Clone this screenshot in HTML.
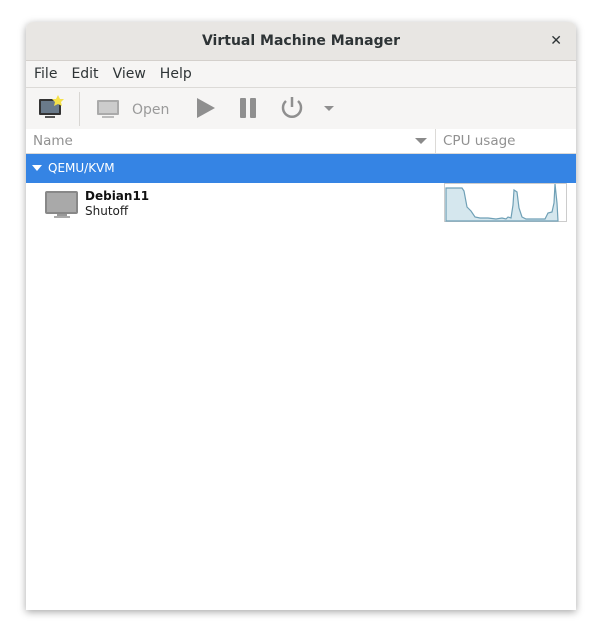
<!DOCTYPE html>
<html><head><style>
body{margin:0;width:602px;height:639px;background:#fff;font-family:"DejaVu Sans","Liberation Sans",sans-serif;position:relative;overflow:hidden}
.win{position:absolute;left:26px;top:22px;width:550px;height:588px;background:#fff;border-radius:7px 7px 0 0;box-shadow:0 2px 8px rgba(0,0,0,.35);overflow:hidden}
.title{height:38px;background:#e8e6e3;border-bottom:1px solid #d4d0cc;text-align:center;line-height:38px;font-size:14px;font-weight:bold;color:#2e3436;position:relative}
.x{position:absolute;right:14px;top:0;font-size:14px}
.menu{height:26px;background:#f6f5f4;font-size:14px;color:#2e3436;line-height:26px;border-bottom:1px solid #dcdad7}
.menu span{margin-left:8px;margin-right:6px}
.tb{height:41px;background:#f6f5f4;position:relative}
.hdr{height:24px;border-bottom:1px solid #dcdad7;position:relative;font-size:13.5px;color:#919191;line-height:24px}
.grp{height:29px;background:#3584e4;color:#fff;font-size:12px;line-height:29px;position:relative}
</style></head><body>
<div class="win">
<div class="title">Virtual Machine Manager<span class="x">✕</span></div>
<div class="menu"><span>File</span><span>Edit</span><span>View</span><span>Help</span></div>
<div class="tb">
 <svg width="550" height="41" style="position:absolute;left:0;top:0">
  <rect x="13" y="11" width="22" height="16" rx="1" fill="#333"/><rect x="15" y="13" width="18" height="12" fill="#6a7a8a"/>
  <rect x="19" y="28" width="10" height="2" fill="#555"/>
  <polygon points="32,7 34,11 38,11 35,14 36,18 32,16 28,18 29,14 26,11 30,11" fill="#f5e14a"/>
  <line x1="53.5" y1="4" x2="53.5" y2="38" stroke="#d8d6d3"/>
  <rect x="71" y="12" width="22" height="15" rx="1" fill="#aaa"/><rect x="73" y="14" width="18" height="11" fill="#ccc"/>
  <rect x="76" y="28" width="12" height="2" fill="#bbb"/>
  <text x="106" y="26" font-size="14" fill="#9a9a9a" font-family="DejaVu Sans, sans-serif">Open</text>
  <polygon points="171,10 189,20 171,30" fill="#8f8f8f"/>
  <rect x="214" y="10" width="6" height="20" rx="1" fill="#8f8f8f"/><rect x="224" y="10" width="6" height="20" rx="1" fill="#8f8f8f"/>
  <path d="M260 13 A9 9 0 1 0 272 13" fill="none" stroke="#8f8f8f" stroke-width="2.5"/>
  <line x1="266" y1="9" x2="266" y2="19" stroke="#8f8f8f" stroke-width="2.5"/>
  <polygon points="298,18 308,18 303,23" fill="#8f8f8f"/>
 </svg>
</div>
<div class="hdr"><span style="margin-left:7px">Name</span>
 <svg width="12" height="8" style="position:absolute;left:389px;top:9px"><polygon points="0,0 12,0 6,6" fill="#8a8a8a"/></svg>
 <div style="position:absolute;left:409px;top:0;height:24px;border-left:1px solid #dcdad7;padding-left:7px">CPU usage</div>
</div>
<div class="grp"><svg width="10" height="8" style="position:absolute;left:6px;top:11px"><polygon points="0,0 10,0 5,6" fill="#fff"/></svg><span style="margin-left:22px">QEMU/KVM</span></div>
<div style="position:relative;height:40px">
 <svg width="60" height="40" style="position:absolute;left:0;top:0">
  <rect x="19" y="8" width="33" height="23" rx="2" fill="#888"/><rect x="21" y="10" width="29" height="19" fill="#a9a9a9"/>
  <rect x="31" y="31" width="10" height="2" fill="#999"/><rect x="28" y="33" width="16" height="2" fill="#aaa"/>
 </svg>
 <div style="position:absolute;left:59px;top:6px;font-size:12px;font-weight:bold;color:#111">Debian11</div>
 <div style="position:absolute;left:59px;top:21px;font-size:12px;color:#222">Shutoff</div>
 <svg width="124" height="40" style="position:absolute;left:418px;top:0">
  <rect x="0.5" y="0.5" width="122" height="38" fill="#fff" stroke="#ccc"/>
  <path d="M2 5 L18 5 L20 8 L23 24 L27 28 L31 34 L36 35 L44 35 L52 36 L58 35 L62 36 L64 34 L67 35 L69 22 L70 7 L73 9 L75 25 L78 34 L82 36 L101 36 L104 30 L108 29 L110 20 L111 1 L113 20 L114 38 L2 38 Z" fill="#d5e7ee" stroke="#6fa0b6" stroke-width="1.2"/>
 </svg>
</div>
</div>
</body></html>
